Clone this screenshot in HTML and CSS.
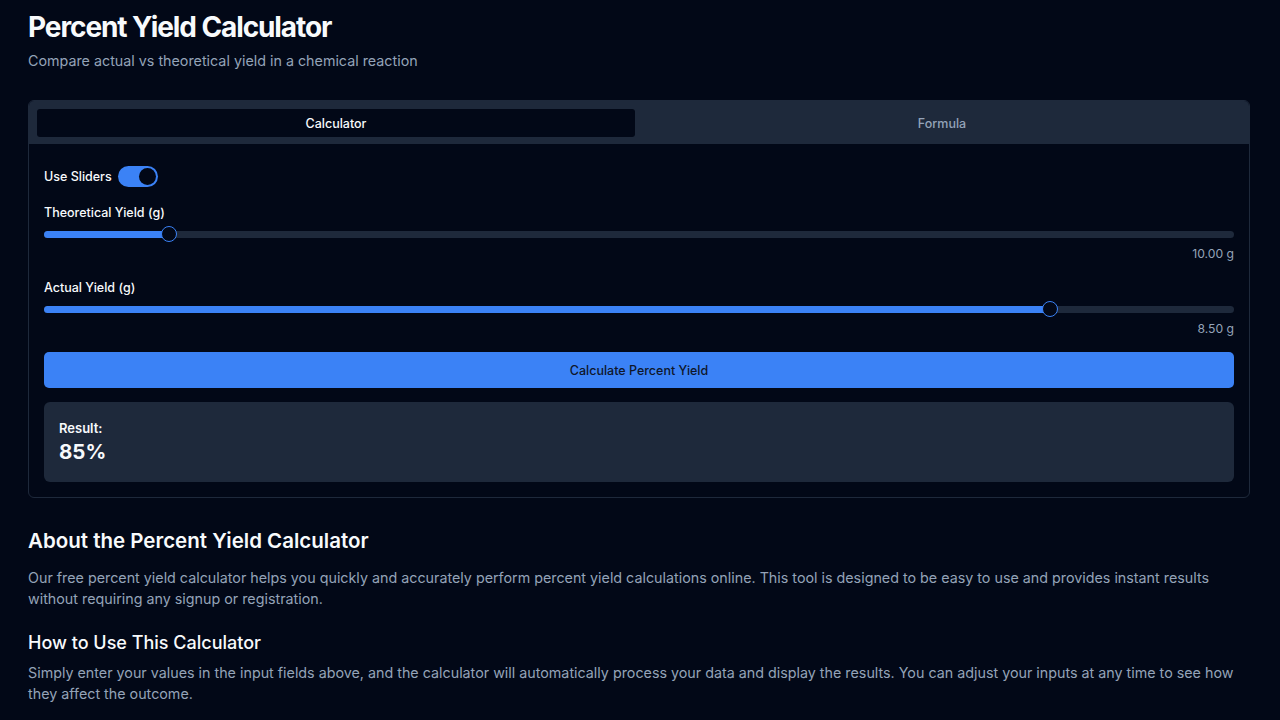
FILE: index.html
```html
<!DOCTYPE html>
<html lang="en">
<head>
  <meta charset="UTF-8" />
  <meta name="viewport" content="width=device-width, initial-scale=1.0"/>
  <title>Percent Yield Calculator</title>
  <link rel="stylesheet" href="styles.css">
</head>
<body>
  <main class="page">
    <h1>Percent Yield Calculator</h1>
    <p class="subtitle">Compare actual vs theoretical yield in a chemical reaction</p>

    <div class="card">
      <div class="tabs">
        <div class="tab active">Calculator</div>
        <div class="tab">Formula</div>
      </div>

      <div class="controls">
        <div class="switch-row">
          <span class="label">Use Sliders</span>
          <span class="switch"><span class="switch-thumb"></span></span>
        </div>

        <div class="field">
          <div class="label">Theoretical Yield (g)</div>
          <div class="slider">
            <div class="track"><div class="range" style="width: 10%"></div></div>
            <div class="thumb" style="left: calc(10% - 1.6px)"></div>
          </div>
          <div class="value">10.00 g</div>
        </div>

        <div class="field">
          <div class="label">Actual Yield (g)</div>
          <div class="slider">
            <div class="track"><div class="range" style="width: 85%"></div></div>
            <div class="thumb" style="left: calc(85% - 13.6px)"></div>
          </div>
          <div class="value">8.50 g</div>
        </div>

        <button type="button">Calculate Percent Yield</button>

        <div class="result">
          <div class="result-label">Result:</div>
          <div class="result-value">85%</div>
        </div>
      </div>
    </div>

    <section class="about">
      <h2>About the Percent Yield Calculator</h2>
      <p>Our free percent yield calculator helps you quickly and accurately perform percent yield calculations online. This tool is designed to be easy to use and provides instant results without requiring any signup or registration.</p>
      <h3>How to Use This Calculator</h3>
      <p>Simply enter your values in the input fields above, and the calculator will automatically process your data and display the results. You can adjust your inputs at any time to see how they affect the outcome.</p>
    </section>
  </main>
</body>
</html>
```

FILE: styles.css
```css
body {
  margin: 0;
  background-color: #020817;
  color: #f8fafc;
  font-family: Inter, "Noto Sans", sans-serif;
  overflow: hidden;
}
.page {
  padding: 9px 30px 0 28px;
}
h1 {
  margin: 0;
  font-size: 28px;
  line-height: 36px;
  font-weight: 700;
  letter-spacing: -1.1px;
}
.subtitle {
  margin: 6px 0 0;
  font-size: 14.3px;
  line-height: 20px;
  color: #94a3b8;
}
.card {
  margin-top: 29px;
  border: 1px solid #1e293b;
  border-radius: 6px;
  overflow: hidden;
}
.tabs {
  display: flex;
  gap: 8px;
  height: 43px;
  box-sizing: border-box;
  padding: 8px 8px 7px;
  background: #1e293b;
}
.tab {
  flex: 1;
  display: flex;
  align-items: center;
  justify-content: center;
  border-radius: 3px;
  font-size: 12.5px;
  font-weight: 500;
  color: #94a3b8;
}
.tab.active {
  background: #020817;
  color: #f8fafc;
}
.controls {
  padding: 22px 15px 15px;
}
.switch-row {
  display: flex;
  align-items: center;
  gap: 6px;
  height: 21px;
}
.label {
  font-size: 12.5px;
  line-height: 16px;
  font-weight: 500;
}
.switch {
  display: flex;
  justify-content: flex-end;
  align-items: center;
  width: 40px;
  height: 21px;
  box-sizing: border-box;
  padding: 2px;
  border-radius: 11px;
  background: #3b82f6;
}
.switch-thumb {
  width: 17px;
  height: 17px;
  border-radius: 50%;
  background: #020817;
}
.field {
  margin-top: 18px;
}
.slider {
  position: relative;
  height: 16px;
  margin-top: 5px;
  display: flex;
  align-items: center;
}
.track {
  width: 100%;
  height: 7px;
  border-radius: 4px;
  background: #1e293b;
  overflow: hidden;
}
.range {
  height: 100%;
  background: #3b82f6;
}
.thumb {
  position: absolute;
  top: 0;
  width: 16px;
  height: 16px;
  box-sizing: border-box;
  border: 1.5px solid #3b82f6;
  border-radius: 50%;
  background: #020817;
}
.value {
  margin-top: 4px;
  text-align: right;
  font-size: 12.2px;
  line-height: 16px;
  color: #94a3b8;
}
button {
  display: block;
  width: 100%;
  height: 36px;
  margin-top: 15px;
  border: none;
  border-radius: 5px;
  background: #3b82f6;
  color: #0f172a;
  font-family: inherit;
  font-size: 12.5px;
  font-weight: 500;
}
.result {
  margin-top: 14px;
  padding: 16px 15px;
  border-radius: 6px;
  background: #1e293b;
}
.result-label {
  font-size: 13px;
  line-height: 20px;
  font-weight: 600;
}
.result-value {
  font-size: 20.5px;
  line-height: 28px;
  font-weight: 700;
}
.about h2 {
  margin: 29px 0 0;
  font-size: 20.5px;
  line-height: 28px;
  font-weight: 600;
}
.about p {
  margin: 12px 0 0;
  font-size: 14.3px;
  line-height: 21px;
  color: #94a3b8;
}
.about h3 {
  margin: 22px 0 0;
  font-size: 18px;
  line-height: 24px;
  font-weight: 500;
}
.about h3 + p {
  margin-top: 7px;
}
```
